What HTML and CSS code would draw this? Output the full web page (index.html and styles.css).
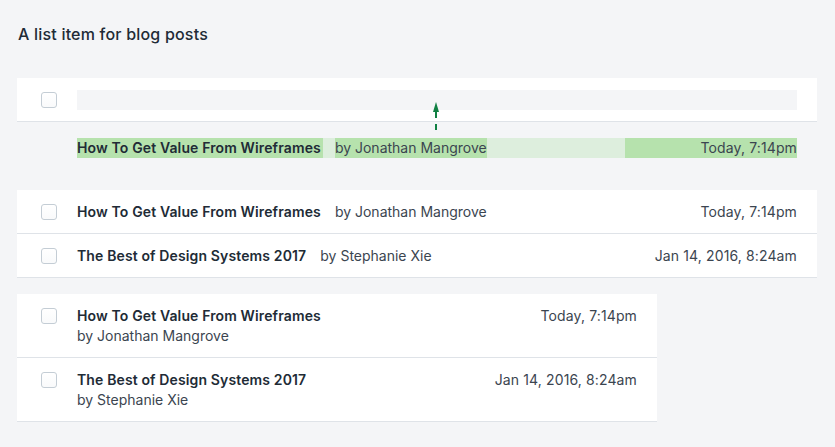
FILE: index.html
```html
<!DOCTYPE html>
<html lang="en">
<head>
<meta charset="utf-8">
<title>Blog post list items</title>
<link rel="stylesheet" href="styles.css">
</head>
<body>
<main class="page">
  <h1 class="heading">A list item for blog posts</h1>

  <section class="drag-demo">
    <div class="card">
      <div class="row">
        <span class="checkbox"></span>
        <div class="placeholder"></div>
      </div>
    </div>
    <div class="ghost">
      <span class="ghost-title">How To Get Value From Wireframes</span>
      <span class="ghost-author">by Jonathan Mangrove</span>
      <span class="ghost-fill"></span>
      <span class="ghost-date">Today, 7:14pm</span>
    </div>
    <div class="drag-arrow">
      <span class="arrow-head"></span>
      <span class="arrow-line"></span>
    </div>
  </section>

  <section class="card card-wide">
    <div class="row">
      <span class="checkbox"></span>
      <div class="inline-item">
        <span class="title">How To Get Value From Wireframes</span>
        <span class="author">by Jonathan Mangrove</span>
        <span class="date">Today, 7:14pm</span>
      </div>
    </div>
    <div class="row">
      <span class="checkbox"></span>
      <div class="inline-item">
        <span class="title">The Best of Design Systems 2017</span>
        <span class="author">by Stephanie Xie</span>
        <span class="date">Jan 14, 2016, 8:24am</span>
      </div>
    </div>
  </section>

  <section class="card card-narrow">
    <div class="row">
      <span class="checkbox"></span>
      <div class="stacked-item">
        <div class="stack">
          <span class="title">How To Get Value From Wireframes</span>
          <span class="author-line">by Jonathan Mangrove</span>
        </div>
        <span class="date">Today, 7:14pm</span>
      </div>
    </div>
    <div class="row">
      <span class="checkbox"></span>
      <div class="stacked-item">
        <div class="stack">
          <span class="title">The Best of Design Systems 2017</span>
          <span class="author-line">by Stephanie Xie</span>
        </div>
        <span class="date">Jan 14, 2016, 8:24am</span>
      </div>
    </div>
  </section>
</main>
</body>
</html>
```

FILE: styles.css
```css
* {
  box-sizing: border-box;
}

html, body {
  margin: 0;
  padding: 0;
  background: #f4f5f7;
}

body {
  font-family: Inter, "Noto Sans", "Liberation Sans", sans-serif;
  font-size: 14px;
  line-height: 20px;
  letter-spacing: 0.13px;
  color: #212b36;
}

.page {
  padding: 24px 18px 0 17px;
}

.heading {
  margin: 0 0 34px 1px;
  font-size: 16px;
  line-height: 20px;
  font-weight: 500;
  letter-spacing: 0.2px;
  color: #212b36;
}

.card {
  background: #fff;
}

.card-wide {
  margin-top: 32px;
}

.card-narrow {
  margin-top: 16px;
  width: 640px;
}

.row {
  display: flex;
  align-items: flex-start;
  padding: 12px 20px 11px 24px;
  border-bottom: 1px solid #dfe3e8;
}

.checkbox {
  flex: none;
  width: 16px;
  height: 16px;
  margin-top: 2px;
  margin-right: 20px;
  border: 1px solid #c4cdd5;
  border-radius: 3px;
  background: linear-gradient(#fff, #f9fafb);
}

.placeholder {
  flex: 1;
  height: 20px;
  background: #f4f5f7;
}

.drag-demo {
  position: relative;
}

.ghost {
  display: flex;
  margin: 16px 20px 0 60px;
  height: 20px;
  background: #ddeedd;
  color: #212b36;
}

.ghost-title {
  font-weight: 600;
  background: #b6e2ad;
  padding-right: 2px;
}

.ghost-author {
  margin-left: 12px;
  background: #b6e2ad;
  color: #3b4550;
  letter-spacing: 0;
}

.ghost-fill {
  flex: 1;
}

.ghost-date {
  width: 172px;
  text-align: right;
  background: #b6e2ad;
  color: #3b4550;
}

.drag-arrow {
  position: absolute;
  left: 416px;
  top: 24px;
  width: 6px;
  display: flex;
  flex-direction: column;
  align-items: center;
}

.arrow-head {
  width: 0;
  height: 0;
  border-left: 3px solid transparent;
  border-right: 3px solid transparent;
  border-bottom: 10px solid #108043;
}

.arrow-line {
  width: 0;
  height: 18px;
  border-left: 2px dashed #108043;
}

.inline-item {
  flex: 1;
  display: flex;
}

.title {
  font-weight: 600;
  color: #212b36;
}

.author {
  margin-left: 14px;
  color: #3b4550;
  letter-spacing: 0;
}

.date {
  margin-left: auto;
  color: #3b4550;
  white-space: nowrap;
}

.stacked-item {
  flex: 1;
  display: flex;
  align-items: flex-start;
}

.stack {
  display: flex;
  flex-direction: column;
}

.author-line {
  color: #3b4550;
  letter-spacing: 0;
}
```
